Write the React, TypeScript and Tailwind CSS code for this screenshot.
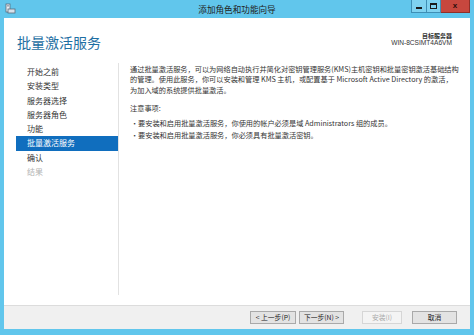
// 添加角色和功能向导 — 批量激活服务 page (Windows Server 8 style wizard)

const CJK = "font-['Noto_Sans_CJK_SC','Noto_Sans',sans-serif]";

const STEPS: { label: string; state: "done" | "active" | "todo" }[] = [
  { label: "开始之前", state: "done" },
  { label: "安装类型", state: "done" },
  { label: "服务器选择", state: "done" },
  { label: "服务器角色", state: "done" },
  { label: "功能", state: "done" },
  { label: "批量激活服务", state: "active" },
  { label: "确认", state: "done" },
  { label: "结果", state: "todo" },
];

function TitleIcon() {
  return (
    <svg width="11" height="11" viewBox="0 0 11 11">
      <rect x="1" y="1" width="4" height="8" fill="#e8eef4" stroke="#5a6b7c" strokeWidth="0.8" />
      <rect x="3" y="6" width="7" height="4" fill="#d7e2ec" stroke="#5a6b7c" strokeWidth="0.8" />
      <rect x="2" y="2.5" width="2" height="0.8" fill="#5a6b7c" />
    </svg>
  );
}

function WinButton({
  label,
  disabled,
  className,
}: {
  label: string;
  disabled?: boolean;
  className?: string;
}) {
  return (
    <div
      className={`flex h-[13px] items-center justify-center border text-[6.8px] leading-none ${
        disabled
          ? "border-[#d6d6d6] bg-[#f4f4f4] text-[#ababab]"
          : "border-[#a9a9a9] bg-[#e3e3e3] text-[#222]"
      } ${className ?? ""}`}
    >
      {label}
    </div>
  );
}

export default function App() {
  return (
    <div className={`flex h-[335px] w-[474px] flex-col bg-[#61c6ec] ${CJK}`}>
      {/* title bar */}
      <div className="flex h-[18px] flex-none items-start">
        <div className="flex w-[63px] pl-[5px] pt-[3px]">
          <TitleIcon />
        </div>
        <div className="flex-1 pt-[3px] text-center text-[8.6px] leading-[12px] text-[#222]">
          添加角色和功能向导
        </div>
        <div className="flex w-[63px] pr-[4px]">
          <div className="flex h-[13px] w-[16px] items-center justify-center border border-t-0 border-[#3f8fb5] bg-[#7fd2f0]">
            <div className="mt-[3px] h-[2px] w-[6px] bg-[#1b1b1b]" />
          </div>
          <div className="flex h-[13px] w-[14px] items-center justify-center border border-l-0 border-t-0 border-[#3f8fb5] bg-[#7fd2f0]">
            <div className="h-[6px] w-[7px] border border-t-2 border-[#1b1b1b]" />
          </div>
          <div className="flex h-[13px] flex-1 items-center justify-center border border-l-0 border-t-0 border-[#8f2f28] bg-[#c7473e] font-['Liberation_Sans',sans-serif] text-[8px] font-bold leading-none text-[#2a0d0b]">
            x
          </div>
        </div>
      </div>

      {/* client area */}
      <div className="mx-[4px] flex flex-1 flex-col bg-white">
        <header className="flex h-[45px] flex-none items-start justify-between">
          <h1 className="ml-[13px] mt-[15px] text-[14px] leading-[18px] text-[#1e6fa3]">
            批量激活服务
          </h1>
          <div className="mr-[18px] mt-[14px] text-right leading-[7px] text-[#333]">
            <div className="text-[6px] font-bold">目标服务器</div>
            <div className="font-['Liberation_Sans',sans-serif] text-[6.6px]">WIN-8CSIMT4A6VM</div>
          </div>
        </header>

        <div className="flex flex-1">
          <nav className="mb-[10px] w-[115px] flex-none border-r border-[#e2e2e2] pl-[12px] pt-[2px]">
            <ul className="text-[8px] leading-[14.3px]">
              {STEPS.map((s) => (
                <li
                  key={s.label}
                  className={`h-[14.3px] w-[102px] pl-[11px] ${
                    s.state === "active"
                      ? "bg-[#106ebe] text-white"
                      : s.state === "todo"
                        ? "text-[#b4b4b4]"
                        : "text-[#333]"
                  }`}
                >
                  {s.label}
                </li>
              ))}
            </ul>
          </nav>

          <section className="flex-1 whitespace-nowrap pl-[11px] pt-[0.5px] text-[7.2px] leading-[10.5px] text-[#333]">
            <p>
              通过批量激活服务，可以为网络自动执行并简化对密钥管理服务(KMS)主机密钥和批量密钥激活基础结构
              <br />
              的管理。使用此服务，你可以安装和管理 KMS 主机，或配置基于 Microsoft Active Directory 的激活，
              <br />
              为加入域的系统提供批量激活。
            </p>
            <p className="mt-[8px]">注意事项:</p>
            <ul className="mt-[4px] space-y-[1.5px]">
              <li className="flex">
                <span className="w-[8px] pl-[1px]">•</span>
                要安装和启用批量激活服务，你使用的帐户必须是域 Administrators 组的成员。
              </li>
              <li className="flex">
                <span className="w-[8px] pl-[1px]">•</span>
                要安装和启用批量激活服务，你必须具有批量激活密钥。
              </li>
            </ul>
          </section>
        </div>

        <footer className="flex h-[24px] flex-none items-start border-t border-[#dcdcdc] bg-[#f0f0f0] pt-[5px]">
          <div className="ml-auto flex pr-[13px]">
            <WinButton label="< 上一步(P)" className="w-[46px]" />
            <WinButton label="下一步(N) >" className="ml-[3px] w-[45px] bg-[#dadada]" />
            <WinButton label="安装(I)" disabled className="ml-[18px] w-[40px]" />
            <WinButton label="取消" className="ml-[10px] w-[45px]" />
          </div>
        </footer>
      </div>

      <div className="h-[6px] flex-none" />
    </div>
  );
}
